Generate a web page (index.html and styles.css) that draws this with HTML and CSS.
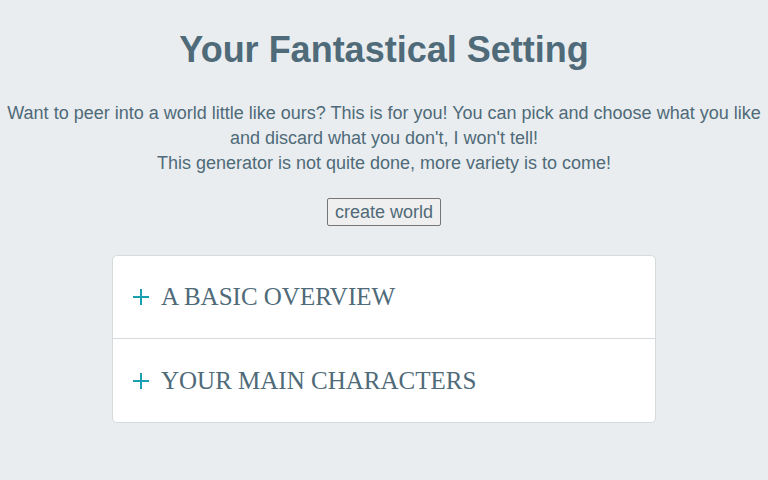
FILE: index.html
```html
<!DOCTYPE html>
<html>
<head>
<meta charset="utf-8">
<link rel="stylesheet" href="styles.css">
</head>
<body>
<h1 class="title">Your Fantastical Setting</h1>
<p class="intro">Want to peer into a world little like ours? This is for you! You can pick and choose what you like and discard what you don't, I won't tell!<br>This generator is not quite done, more variety is to come!</p>
<div class="actions"><button class="create">create world</button></div>
<div class="card">
  <div class="row">
    <svg class="plus" width="16" height="16" viewBox="0 0 16 16"><path d="M8 0V16M0 8H16" stroke="#1aa0b0" stroke-width="2"/></svg>
    <span class="label">A BASIC OVERVIEW</span>
  </div>
  <div class="row">
    <svg class="plus" width="16" height="16" viewBox="0 0 16 16"><path d="M8 0V16M0 8H16" stroke="#1aa0b0" stroke-width="2"/></svg>
    <span class="label">YOUR MAIN CHARACTERS</span>
  </div>
</div>
</body>
</html>
```
FILE: styles.css
```css
html, body {
  margin: 0;
  padding: 0;
  background: #e9edf0;
  color: #4f6a78;
  font-family: "Liberation Sans", Arial, sans-serif;
}
.title {
  margin: 0;
  padding-top: 28px;
  font-size: 36px;
  line-height: 44px;
  font-weight: bold;
  text-align: center;
}
.intro {
  margin: 29px 0 0;
  font-size: 18px;
  line-height: 25px;
  text-align: center;
}
.actions {
  margin-top: 22px;
  text-align: center;
}
.create {
  font-family: "Liberation Sans", Arial, sans-serif;
  font-size: 18px;
  color: #4f6a78;
  background: #efefef;
  border: 1px solid #767676;
  border-radius: 2px;
  padding: 3px 7px;
  line-height: 20px;
}
.card {
  width: 542px;
  margin: 29px auto 0;
  background: #fff;
  border: 1px solid #d5dadd;
  border-radius: 5px;
}
.row {
  display: flex;
  align-items: center;
  height: 82px;
  padding-left: 20px;
}
.row + .row {
  border-top: 1px solid #d5dadd;
  height: 83px;
}
.plus {
  flex: none;
  margin-right: 12px;
}
.label {
  font-family: "Liberation Serif", "Times New Roman", serif;
  font-size: 25px;
  color: #4f6a78;
}
```
